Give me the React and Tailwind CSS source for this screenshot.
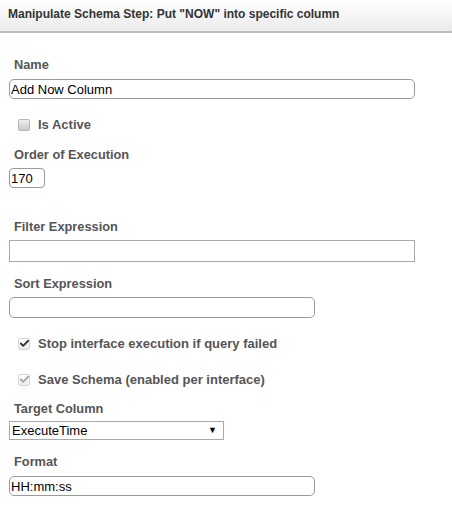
import { Check } from "lucide-react"

const font = { fontFamily: '"Liberation Sans", Arial, sans-serif' }

function Label({ children, className = "" }) {
  return (
    <div className={`pl-[14px] text-[12.8px] leading-4 font-bold text-[#555] ${className}`}>
      {children}
    </div>
  )
}

function Box({ checked, disabled }) {
  return (
    <span
      className={`relative flex h-[12px] w-[12px] items-center justify-center rounded-[2px] border ${
        checked
          ? "border-[#d6d6d6] bg-gradient-to-b from-white to-[#ececec]"
          : "border-[#b5b5b5] bg-gradient-to-b from-[#f0f0f0] to-[#c9c9c9]"
      }`}
    >
      {checked && (
        <Check
          className={`absolute left-[0px] top-[-1px] h-[11px] w-[11px] ${disabled ? "text-[#a8a8a8]" : "text-[#333]"}`}
          strokeWidth={4}
        />
      )}
    </span>
  )
}

function CheckRow({ label, checked, disabled, className = "" }) {
  return (
    <div className={`flex h-4 items-center pl-[18px] ${className}`}>
      <Box checked={checked} disabled={disabled} />
      <span className="ml-[8px] text-[13px] font-bold text-[#555]">{label}</span>
    </div>
  )
}

function Field({ value = "", className = "" }) {
  return (
    <input
      readOnly
      defaultValue={value}
      className={`ml-[9px] block border border-[#9a9a9a] px-[1px] text-[13px] text-black outline-none ${className}`}
    />
  )
}

export default function App() {
  return (
    <div className="h-[507px] w-[452px] overflow-hidden bg-white" style={font}>
      <div className="flex h-[33px] items-center border-b-2 border-[#bdbdbd] bg-gradient-to-b from-white to-[#ebebeb] pb-[3px] pl-[8px]">
        <span className="text-[12px] font-bold text-[#333]">Manipulate Schema Step: Put "NOW" into specific column</span>
      </div>

      <Label className="mt-[24px]">Name</Label>
      <Field value="Add Now Column" className="mt-[6px] h-[20px] w-[406px] rounded-[5px]" />

      <CheckRow label="Is Active" className="mt-[18px]" />

      <Label className="mt-[14px]">Order of Execution</Label>
      <Field value="170" className="mt-[5px] h-[20px] w-[36px] rounded-[4px]" />

      <Label className="mt-[31px]">Filter Expression</Label>
      <Field className="mt-[5px] h-[22px] w-[406px] border-[#a9a9a9]" />

      <Label className="mt-[14px]">Sort Expression</Label>
      <Field className="mt-[5px] h-[21px] w-[306px] rounded-[5px]" />

      <CheckRow label="Stop interface execution if query failed" checked className="mt-[18px]" />
      <CheckRow label="Save Schema (enabled per interface)" checked disabled className="mt-[20px]" />

      <Label className="mt-[13px]">Target Column</Label>
      <div className="ml-[9px] mt-[4px] flex h-[19px] w-[215px] items-center justify-between border border-[#a9a9a9] pl-[2px] pr-[6px] text-[13px] text-black">
        <span>ExecuteTime</span>
        <span className="text-[9px]">▼</span>
      </div>

      <Label className="mt-[14px]">Format</Label>
      <Field value="HH:mm:ss" className="mt-[6px] h-[20px] w-[306px] rounded-[5px]" />
    </div>
  )
}
